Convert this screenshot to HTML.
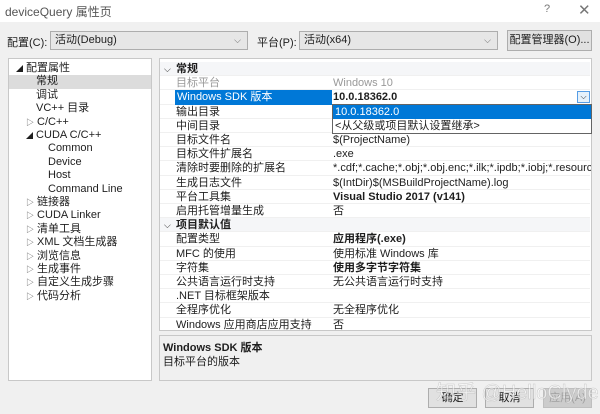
<!DOCTYPE html>
<html><head><meta charset="utf-8"><style>
*{margin:0;padding:0;box-sizing:border-box}
body{width:600px;height:414px;background:#f0f0f0;font-family:"Liberation Sans","Noto Sans CJK SC",sans-serif;font-size:11px;color:#1e1e1e;position:relative;overflow:hidden}
.a{position:absolute;white-space:nowrap}
.tb{left:0;top:0;width:600px;height:22px;background:#fff}
.combo{background:#e6e6e6;border:1px solid #adadad;height:19px;line-height:17px;padding-left:4px}
.btn{background:#e1e1e1;border:1px solid #adadad;text-align:center;line-height:18px}
.panel{background:#fff;border:1px solid #c8c8c8;overflow:hidden}
.tr{position:absolute;left:0;height:13.4px;line-height:13.4px}
.gr{position:absolute;left:0;width:430px;height:14.2px;line-height:14.2px;border-bottom:1px solid #f0f0f0}
.gr .l{position:absolute;left:16px}
.gr .v{position:absolute;left:173px}
.cat{background:#f5f6f8}
b{font-weight:bold}
</style></head><body>
<div class="a tb"></div>
<div class="a" style="left:5px;top:3px;font-size:12px;color:#555">deviceQuery 属性页</div>
<div class="a" style="left:544px;top:3px;color:#777">?</div>
<div class="a" style="left:578px;top:1px;font-size:15px;color:#777">✕</div>

<div class="a" style="left:7px;top:34px">配置(C):</div>
<div class="a combo" style="left:50px;top:31px;width:198px">活动(Debug)<span style="position:absolute;right:6px;color:#666;font-size:9px">⌵</span></div>
<div class="a" style="left:257px;top:34px">平台(P):</div>
<div class="a combo" style="left:299px;top:31px;width:199px">活动(x64)<span style="position:absolute;right:6px;color:#666;font-size:9px">⌵</span></div>
<div class="a btn" style="left:507px;top:30px;width:85px;height:21px">配置管理器(O)...</div>

<div class="a panel" style="left:8px;top:58px;width:144px;height:323px">
<div style="position:relative;left:0;top:3px">
<div class="tr" style="top:0;left:7px"><span style="font-size:7px">◢</span> 配置属性</div>
<div class="tr" style="top:13.4px;width:142px;background:#dcdcdc;padding-left:27px">常规</div>
<div class="tr" style="top:26.8px;left:27px">调试</div>
<div class="tr" style="top:40.2px;left:27px">VC++ 目录</div>
<div class="tr" style="top:53.6px;left:17px"><span style="font-size:8px;color:#555">▷</span> C/C++</div>
<div class="tr" style="top:67px;left:17px"><span style="font-size:7px">◢</span> CUDA C/C++</div>
<div class="tr" style="top:80.4px;left:39px">Common</div>
<div class="tr" style="top:93.8px;left:39px">Device</div>
<div class="tr" style="top:107.2px;left:39px">Host</div>
<div class="tr" style="top:120.6px;left:39px">Command Line</div>
<div class="tr" style="top:134px;left:17px"><span style="font-size:8px;color:#555">▷</span> 链接器</div>
<div class="tr" style="top:147.4px;left:17px"><span style="font-size:8px;color:#555">▷</span> CUDA Linker</div>
<div class="tr" style="top:160.8px;left:17px"><span style="font-size:8px;color:#555">▷</span> 清单工具</div>
<div class="tr" style="top:174.2px;left:17px"><span style="font-size:8px;color:#555">▷</span> XML 文档生成器</div>
<div class="tr" style="top:187.6px;left:17px"><span style="font-size:8px;color:#555">▷</span> 浏览信息</div>
<div class="tr" style="top:201px;left:17px"><span style="font-size:8px;color:#555">▷</span> 生成事件</div>
<div class="tr" style="top:214.4px;left:17px"><span style="font-size:8px;color:#555">▷</span> 自定义生成步骤</div>
<div class="tr" style="top:227.8px;left:17px"><span style="font-size:8px;color:#555">▷</span> 代码分析</div>
</div></div>

<div class="a panel" style="left:159px;top:58px;width:433px;height:273px">
<div style="position:relative;top:3px;left:0">
<div class="gr cat"><span style="position:absolute;left:4px;font-size:9px">⌵</span><span class="l"><b>常规</b></span></div>
<div class="gr" style="top:14.2px"><span class="l" style="color:#999">目标平台</span><span class="v" style="color:#999">Windows 10</span></div>
<div class="gr" style="top:28.4px"><span class="l" style="left:15px;width:157px;background:#0078d7;color:#fff;padding-left:2px">Windows SDK 版本</span><span class="v"><b>10.0.18362.0</b></span><span style="position:absolute;left:417px;top:1px;width:13px;height:12px;border:1px solid #569de5;background:#e5f1fb;font-size:8px;line-height:10px;text-align:center">⌵</span></div>
<div class="gr" style="top:42.6px"><span class="l">输出目录</span></div>
<div class="gr" style="top:56.8px"><span class="l">中间目录</span></div>
<div class="gr" style="top:71px"><span class="l">目标文件名</span><span class="v">$(ProjectName)</span></div>
<div class="gr" style="top:85.2px"><span class="l">目标文件扩展名</span><span class="v">.exe</span></div>
<div class="gr" style="top:99.4px"><span class="l">清除时要删除的扩展名</span><span class="v">*.cdf;*.cache;*.obj;*.obj.enc;*.ilk;*.ipdb;*.iobj;*.resources;*</span></div>
<div class="gr" style="top:113.6px"><span class="l">生成日志文件</span><span class="v">$(IntDir)$(MSBuildProjectName).log</span></div>
<div class="gr" style="top:127.8px"><span class="l">平台工具集</span><span class="v"><b>Visual Studio 2017 (v141)</b></span></div>
<div class="gr" style="top:142px"><span class="l">启用托管增量生成</span><span class="v">否</span></div>
<div class="gr cat" style="top:156.2px"><span style="position:absolute;left:4px;font-size:9px">⌵</span><span class="l"><b>项目默认值</b></span></div>
<div class="gr" style="top:170.4px"><span class="l">配置类型</span><span class="v"><b>应用程序(.exe)</b></span></div>
<div class="gr" style="top:184.6px"><span class="l">MFC 的使用</span><span class="v">使用标准 Windows 库</span></div>
<div class="gr" style="top:198.8px"><span class="l">字符集</span><span class="v"><b>使用多字节字符集</b></span></div>
<div class="gr" style="top:213px"><span class="l">公共语言运行时支持</span><span class="v">无公共语言运行时支持</span></div>
<div class="gr" style="top:227.2px"><span class="l">.NET 目标框架版本</span></div>
<div class="gr" style="top:241.4px"><span class="l">全程序优化</span><span class="v">无全程序优化</span></div>
<div class="gr" style="top:255.6px"><span class="l">Windows 应用商店应用支持</span><span class="v">否</span></div>
</div></div>

<div class="a" style="left:332px;top:104px;width:260px;height:30px;background:#fff;border:1px solid #646464">
<div style="height:14px;line-height:14px;background:#0078d7;color:#fff;padding-left:2px">10.0.18362.0</div>
<div style="height:14px;line-height:14px;padding-left:2px">&lt;从父级或项目默认设置继承&gt;</div>
</div>

<div class="a" style="left:159px;top:335px;width:433px;height:46px;border:1px solid #c8c8c8;background:#f0f0f0">
<div style="position:absolute;left:3px;top:3px"><b>Windows SDK 版本</b></div>
<div style="position:absolute;left:3px;top:17px">目标平台的版本</div>
</div>

<div class="a btn" style="left:428px;top:388px;width:49px;height:20px">确定</div>
<div class="a btn" style="left:485px;top:388px;width:49px;height:20px">取消</div>
<div class="a btn" style="left:543px;top:388px;width:49px;height:20px;color:#a0a0a0;background:#ccc;border-color:#bfbfbf">应用(A)</div>
<div class="a" style="left:436px;top:376px;font-size:20px;color:rgba(255,255,255,0.6);-webkit-text-stroke:0.5px rgba(150,150,150,0.45)">知乎 @HelloClyde</div>
</body></html>
